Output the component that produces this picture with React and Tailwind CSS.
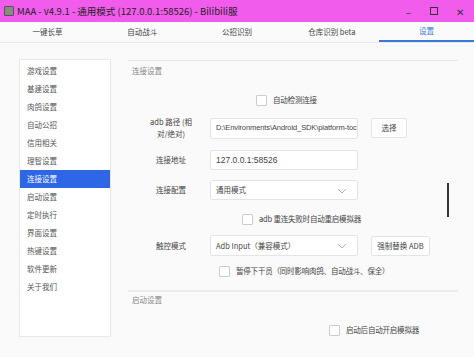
import React from 'react';

const font = { fontFamily: '"Noto Sans CJK SC", "Noto Sans", sans-serif' };
const latin = { fontFamily: '"Liberation Sans", "Noto Sans CJK SC", sans-serif' };

const tabs = ['一键长草', '自动战斗', '公招识别', '仓库识别 beta', '设置'];
const menu = ['游戏设置', '基建设置', '肉鸽设置', '自动公招', '信用相关', '理智设置', '连接设置', '启动设置', '定时执行', '界面设置', '热键设置', '软件更新', '关于我们'];

const Check = ({ label, className = '' }) => (
  <div className={`flex items-center gap-[6px] h-[12px] ${className}`}>
    <span className="w-[11px] h-[11px] border border-[#cdcdcd] bg-white rounded-[1px]" />
    <span className="text-[7.5px] leading-[12px] text-[#444] tracking-[-0.2px]">{label}</span>
  </div>
);

const Chevron = () => (
  <svg width="10" height="6" viewBox="0 0 10 6" className="absolute right-[10px] top-[7px]">
    <path d="M1 1 L5 5 L9 1" fill="none" stroke="#a8a8a8" strokeWidth="0.9" />
  </svg>
);

const Row = ({ label, children, h = 'h-[21px]' }) => (
  <div className="flex items-center pl-[7px]">
    <div className="w-[72px] text-center text-[7.5px] text-[#444] leading-[12px] whitespace-nowrap">{label}</div>
    <div className={`ml-[3px] flex items-center gap-[13px] ${h}`}>{children}</div>
  </div>
);

const Field = ({ children, select, className = 'text-[7.5px]' }) => (
  <div className={`relative w-[148px] h-full bg-white border border-[#e4e4e4] rounded-[2px] px-[5px] flex items-center text-[#444] overflow-hidden whitespace-nowrap ${className}`}>
    {children}
    {select && <Chevron />}
  </div>
);

const Btn = ({ children, w }) => (
  <div className={`${w} h-[20px] bg-white border border-[#e4e4e4] rounded-[2px] flex items-center justify-center text-[7.5px] text-[#444] whitespace-nowrap`}>{children}</div>
);

export default function App() {
  return (
    <div className="w-[474px] h-[357px] bg-[#fafafa] overflow-hidden flex flex-col relative" style={font}>
      {/* title bar */}
      <div className="h-[22px] bg-[#f25cec] flex items-center pl-[4px] shrink-0">
        <div className="w-[10px] h-[10px] bg-[#8a8a80] border border-[#555] rounded-[1px] mr-[3px]" />
        <span className="text-[9.5px] text-[#222]">MAA - v4.9.1 - 通用模式 (127.0.0.1:58526) - Bilibili服</span>
        <div className="ml-auto flex items-center text-[#333] text-[10px]">
          <span className="w-[25px] text-center">–</span>
          <span className="w-[25px] flex justify-center"><span className="w-[8px] h-[8px] border border-[#333]" /></span>
          <span className="w-[28px] text-center">✕</span>
        </div>
      </div>

      {/* tabs */}
      <div className="h-[21px] flex items-stretch border-b border-[#e8e8e8] bg-[#fafafa] shrink-0">
        {tabs.map((t, i) => (
          <div
            key={t}
            className={`flex-1 flex items-center justify-center text-[7.5px] ${i === 4 ? 'text-[#3a78d8] border-b-2 border-[#3a78d8]' : 'text-[#444]'}`}
          >
            {t}
          </div>
        ))}
      </div>

      {/* body */}
      <div className="flex flex-1 min-h-0">
        <div className="w-[128px] pl-[19px] pt-[16px] shrink-0">
          <div className="w-[92px] h-[278px] bg-white border border-[#e8e8e8] pt-[2px]">
            {menu.map((m) => (
              <div
                key={m}
                className={`h-[18px] flex items-center pl-[7px] text-[7.5px] ${m === '连接设置' ? 'bg-[#2e66e6] text-white' : 'text-[#555]'}`}
              >
                {m}
              </div>
            ))}
          </div>
        </div>

        <div className="w-[330px] pt-[17px] flex flex-col">
          <div className="border-t border-[#e6e6e6] pt-[4px] pl-[4px] text-[7.5px] leading-[12px] text-[#888]">连接设置</div>
          <Check label="自动检测连接" className="ml-[128px] mt-[17px]" />
          <div className="mt-[10px]">
            <Row label={<>adb 路径 (相<br />对/绝对)</>}>
              <Field className="text-[7.5px] tracking-[-0.1px]"><span style={latin}>D:\Environments\Android_SDK\platform-toc</span></Field>
              <Btn w="w-[36px]">选择</Btn>
            </Row>
          </div>
          <div className="mt-[10px]">
            <Row label="连接地址" h="h-[20px]">
              <Field className="text-[8.5px]"><span style={latin}>127.0.0.1:58526</span></Field>
            </Row>
          </div>
          <div className="mt-[10px]">
            <Row label="连接配置" h="h-[20px]">
              <Field select>通用模式</Field>
            </Row>
          </div>
          <Check label="adb 重连失败时自动重启模拟器" className="ml-[114px] mt-[13px]" />
          <div className="mt-[10px]">
            <Row label="触控模式">
              <Field select>Adb Input（兼容模式）</Field>
              <Btn w="w-[59px]">强制替换 ADB</Btn>
            </Row>
          </div>
          <Check label="暂停下干员（同时影响肉鸽、自动战斗、保全）" className="ml-[91px] mt-[9px]" />
          <div className="border-t-2 border-[#ececec] mt-[13px] pt-[2px] pl-[4px] text-[7.5px] leading-[12px] text-[#888]">启动设置</div>
          <Check label="启动后自动开启模拟器" className="ml-[201px] mt-[18px]" />
        </div>
      </div>

      {/* scrollbar thumb */}
      <div className="absolute left-[447px] top-[183px] w-[2px] h-[34px] bg-[#333]" />
    </div>
  );
}
